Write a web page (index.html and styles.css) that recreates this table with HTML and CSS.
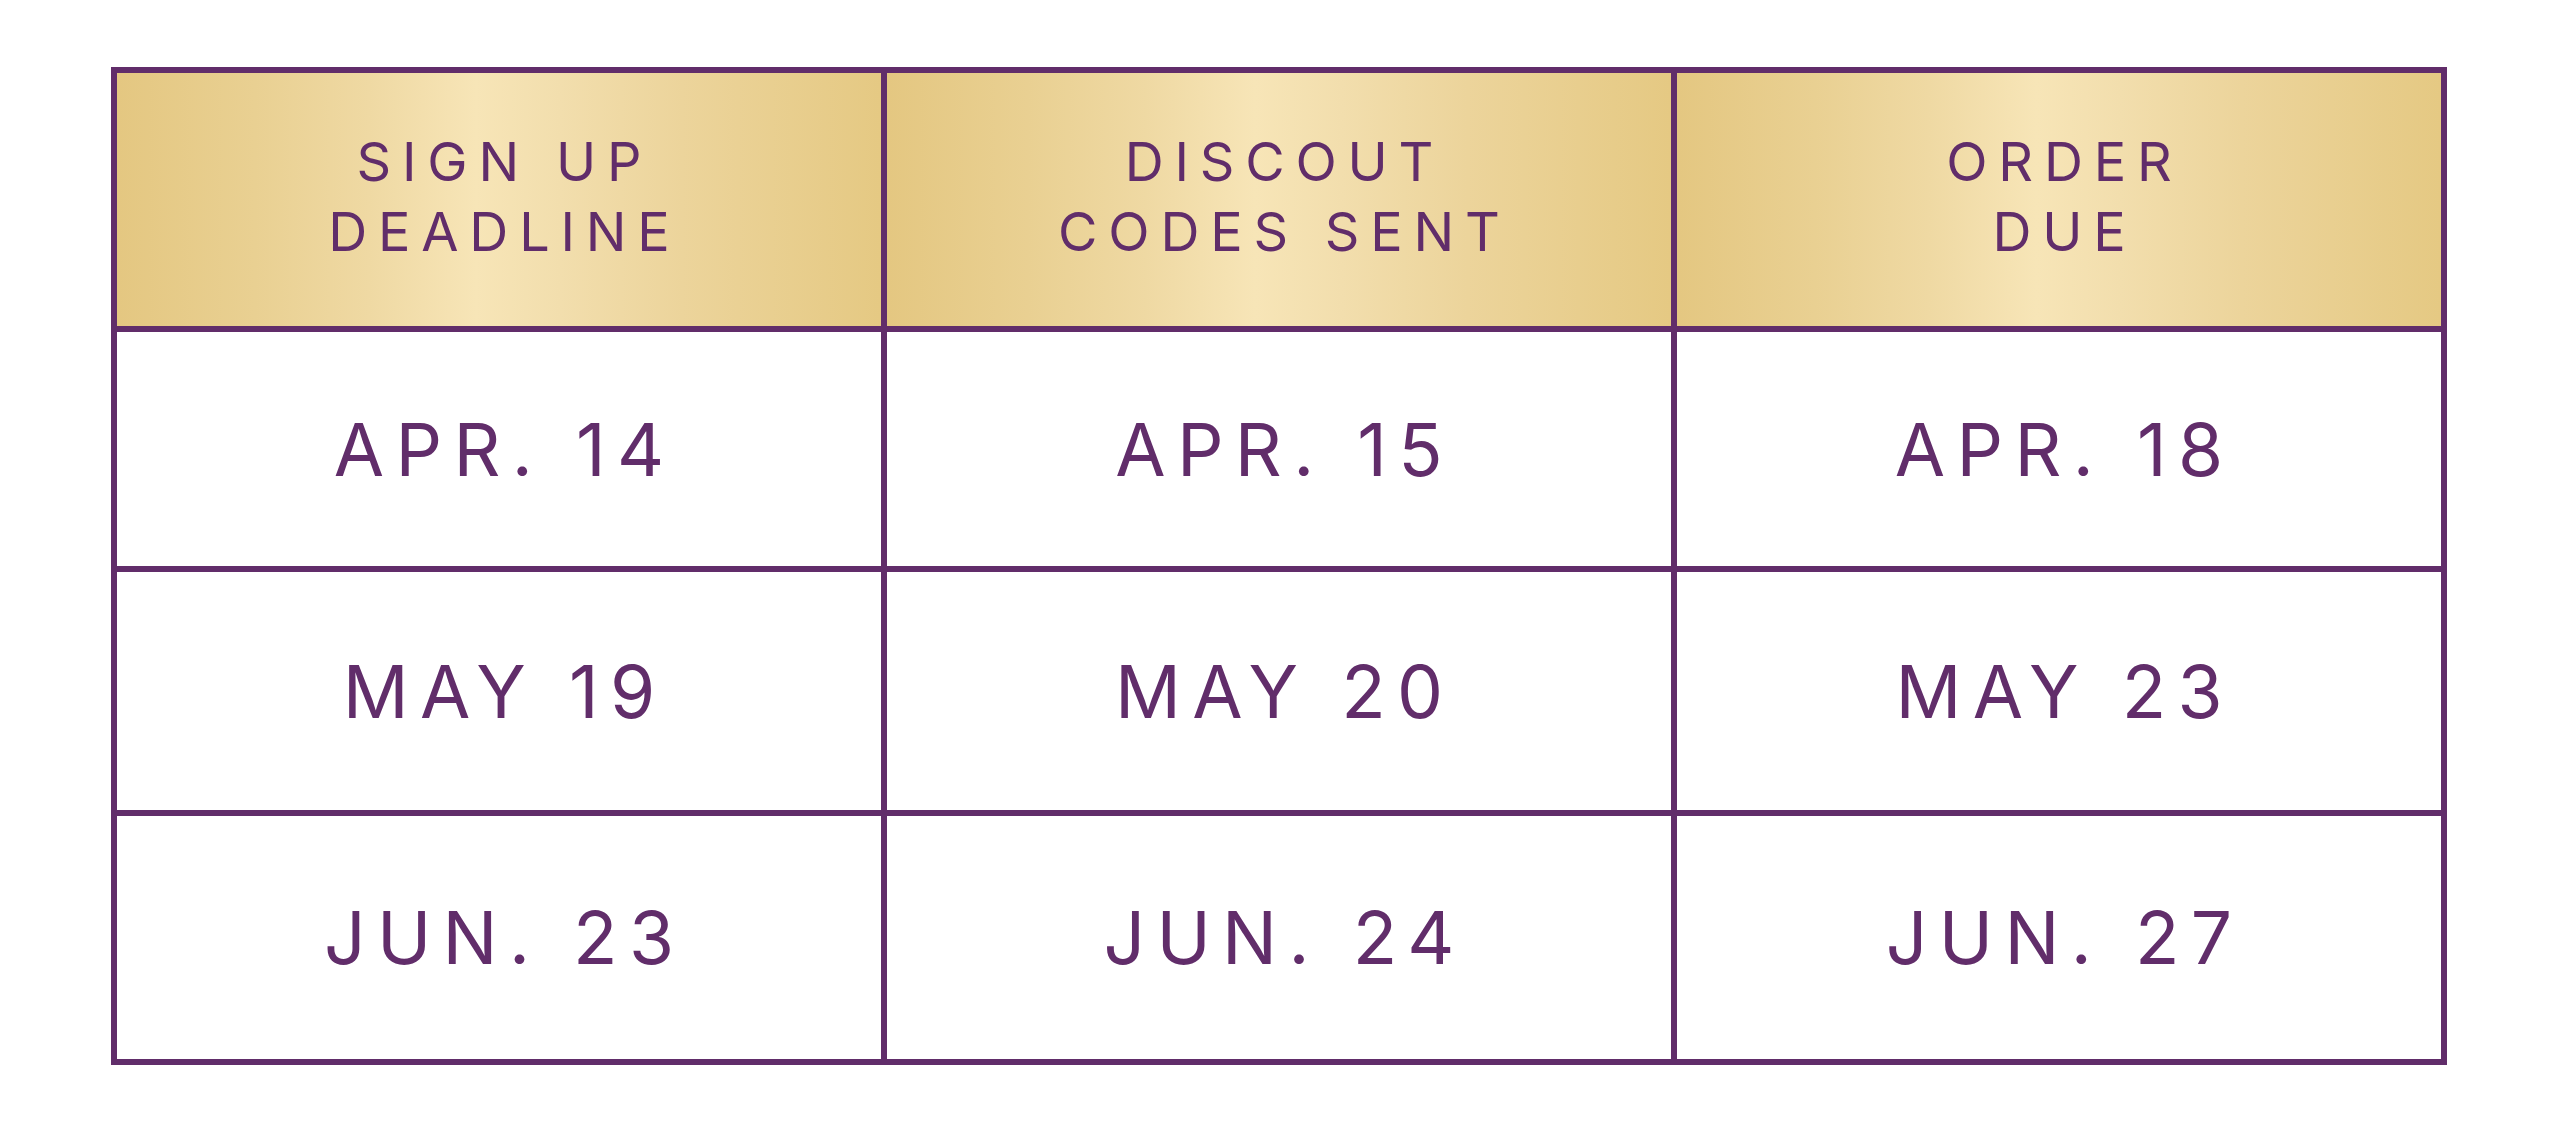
FILE: index.html
```html
<!DOCTYPE html>
<html lang="en">
<head>
<meta charset="utf-8">
<title>Dates</title>
<link rel="stylesheet" href="styles.css">
</head>
<body>
<div class="schedule">
  <div class="cell head"><span>SIGN UP<br>DEADLINE</span></div>
  <div class="cell head"><span>DISCOUT<br>CODES SENT</span></div>
  <div class="cell head"><span>ORDER<br>DUE</span></div>

  <div class="cell date">APR. 14</div>
  <div class="cell date">APR. 15</div>
  <div class="cell date">APR. 18</div>

  <div class="cell date">MAY 19</div>
  <div class="cell date">MAY 20</div>
  <div class="cell date">MAY 23</div>

  <div class="cell date">JUN. 23</div>
  <div class="cell date">JUN. 24</div>
  <div class="cell date">JUN. 27</div>
</div>
</body>
</html>
```
FILE: styles.css
```css
html, body {
  margin: 0;
  padding: 0;
  background: #ffffff;
}

body {
  padding: 67px 0 0 111px;
  font-family: "Inter", "Liberation Sans", sans-serif;
  color: #612d6a;
}

.schedule {
  display: grid;
  grid-template-columns: 764px 784px 764px;
  grid-template-rows: 253px 234px 238px 243px;
  gap: 6px;
  padding: 6px;
  width: max-content;
  background: #612d6a;
}

.cell {
  display: flex;
  align-items: center;
  justify-content: center;
  text-align: center;
  background: #ffffff;
}

.head {
  background: linear-gradient(90deg, #e4c781 0%, #e9d092 18%, #efd9a3 33%, #f7e5b7 47%, #f2dead 58%, #ecd49b 74%, #e5c983 100%);
  font-size: 54px;
  line-height: 70px;
  letter-spacing: 0.2em;
  font-weight: 400;
  padding: 0 0 6px 0.2em;
}

.date {
  font-size: 73px;
  letter-spacing: 0.155em;
  font-weight: 400;
  padding-left: 0.155em;
}
```
